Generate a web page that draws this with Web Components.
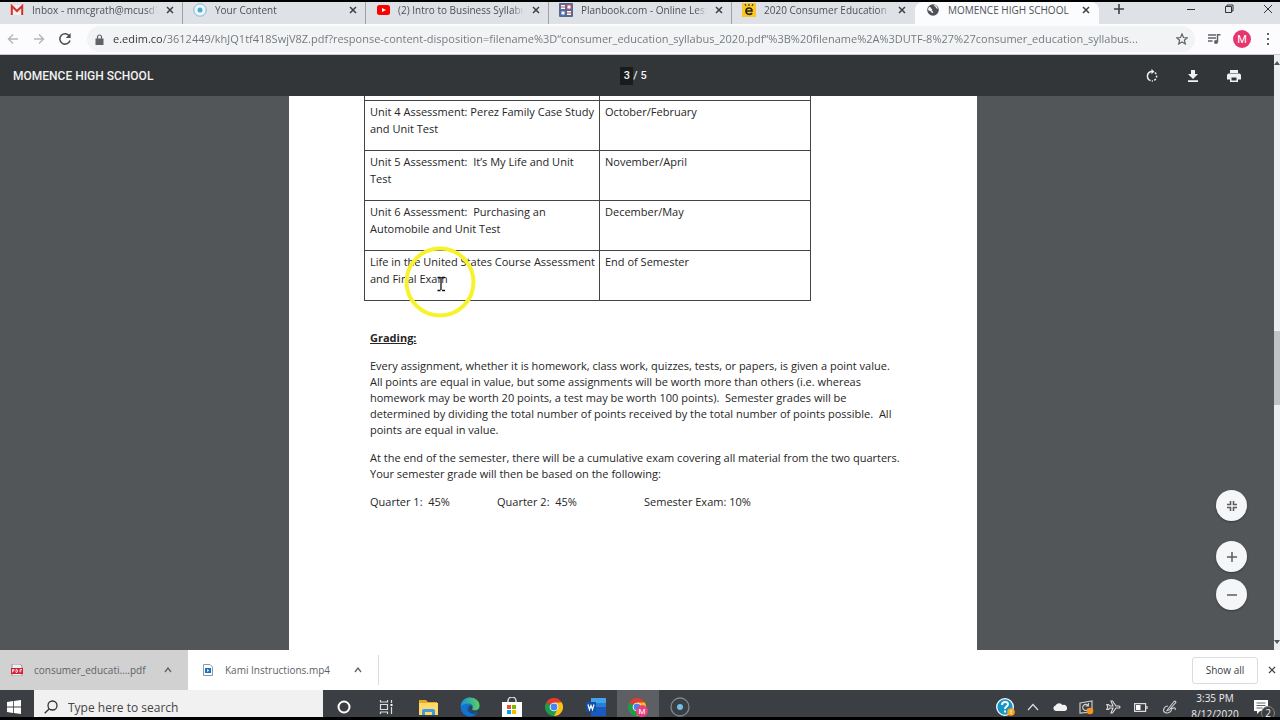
<!DOCTYPE html>
<html lang="en">
<head>
<meta charset="utf-8">
<title>MOMENCE HIGH SCHOOL</title>
<style>
html,body{height:100%;margin:0;background:#000}
body{font-family:"Open Sans","Noto Sans",sans-serif;overflow:hidden}
</style>
</head>
<body>
<desktop-screen></desktop-screen>
<script>
const reset = `:host,*{box-sizing:border-box}button{border:0;background:none;padding:0;margin:0;font:inherit;color:inherit;display:flex;align-items:center;justify-content:center}svg{display:block;flex:none}`;
const define = (name, html) => customElements.define(name, class extends HTMLElement {
  constructor(){
    super();
    const t = document.createElement('template');
    t.innerHTML = `<style>${reset}</style>` + html;
    this.attachShadow({mode:'open'}).append(t.content.cloneNode(true));
  }
});

define('browser-tab', `
<style>
:host{display:flex;align-items:center;flex:0 1 183px;min-width:0;height:22px;padding:0 6px 6px 10px;color:#4d5156;font-size:10px;border-right:1px solid #9fa3a8;background-clip:padding-box}
:host([active]){background:#fbfcfe;border-color:transparent;border-radius:8px 8px 0 0;flex-basis:184px;padding-left:11px}
:host([last]){border-color:transparent}
.icon{width:14px;height:14px;flex:none;display:flex;align-items:center;justify-content:center}
.label{flex:1;min-width:0;margin:0 6px 0 8px;white-space:nowrap;overflow:hidden;line-height:16px;-webkit-mask-image:linear-gradient(90deg,#000 calc(100% - 12px),transparent);mask-image:linear-gradient(90deg,#000 calc(100% - 12px),transparent)}
:host([active]) .label{-webkit-mask-image:none;mask-image:none}
button{width:12px;height:12px;flex:none;color:#3c4043}
</style>
<span class="icon"><slot name="icon"></slot></span><span class="label"><slot></slot></span>
<button aria-label="Close tab"><svg width="8" height="8" viewBox="0 0 8 8"><path d="M1 1l6 6M7 1l-6 6" stroke="currentColor" stroke-width="1.5"/></svg></button>`);

define('tab-strip', `
<style>
:host{display:flex;height:22px;background:#dee1e6;color:#3c4043}
.new{width:40px;height:14px}
.space{flex:1}
.win{width:38px;height:14px;color:#333}
.win:last-child{width:24px;margin-left:8px}
</style>
<browser-tab><svg slot="icon" width="14" height="12" viewBox="0 0 14 12"><path d="M1 1h12v10H1z" fill="#f0f0f0"/><path d="M1.800 11V2L7 7l5.200-5v9" fill="none" stroke="#d93025" stroke-width="2"/></svg>Inbox - mmcgrath@mcusd1.</browser-tab>
<browser-tab><svg slot="icon" width="14" height="14" viewBox="0 0 14 14"><circle cx="7" cy="7" r="6.200" fill="#eef6fa" stroke="#7fb9d6"/><circle cx="7" cy="7" r="2.500" fill="#4bacd8"/></svg>Your Content</browser-tab>
<browser-tab><svg slot="icon" width="14" height="10" viewBox="0 0 14 10"><rect x="1" width="13" height="10" rx="2.500" fill="#f00"/><path d="M6 3l4 2-4 2z" fill="#fff"/></svg>(2) Intro to Business Syllabus</browser-tab>
<browser-tab><svg slot="icon" width="14" height="14" viewBox="0 0 14 14"><rect width="14" height="14" rx="1" fill="#596890"/><path d="M2 2h4v4H2zM8 8h4v4H8z" fill="#fff"/><path d="M8 2h4v4H8z" fill="#fff" stroke="#c65265"/><path d="M2 8h4v4H2z" fill="#fff" stroke="#4a75c4"/><path d="M2 4h4M8 10h4" stroke="#d04848"/></svg>Planbook.com - Online Lesso</browser-tab>
<browser-tab last><svg slot="icon" width="14" height="14" viewBox="0 0 14 14"><path fill="#fbc723" d="M0 0h14v14H0z"/><path d="M4 8h6c0-4-6-4-6 0s5 4 6 2" fill="none" stroke="#2a2618" stroke-width="1.700"/><path d="M4 3L3 1M7 3V1M10 3l1-2" stroke="#2a2618"/></svg>2020 Consumer Education 4t</browser-tab>
<browser-tab active><svg slot="icon" width="12" height="12" viewBox="0 0 12 12"><circle cx="6" cy="6" r="5.800" fill="#4d5156"/><path d="M2 3c1 0 2 0 2 1s2 1 1 2 2 1 1 3c-2 0-2-2-3-2S1 6 1 5zM7 1c0 2 2 1 2 3 1 1 2 0 2 2 0-3-2-5-4-5z" fill="#f4f5f7"/></svg>MOMENCE HIGH SCHOOL</browser-tab>
<button class="new" aria-label="New tab"><svg width="12" height="12" viewBox="0 0 12 12"><path d="M6 1v10M1 6h10" stroke="currentColor" stroke-width="1.600"/></svg></button>
<span class="space"></span>
<button class="win" aria-label="Minimize"><svg width="10" height="10" viewBox="0 0 10 10"><path d="M1 5.500h8" stroke="currentColor"/></svg></button>
<button class="win" aria-label="Restore"><svg width="10" height="10" viewBox="0 0 10 10"><path d="M1.500 2.500h6v6h-6zM3 2V1h6v6H8" fill="none" stroke="currentColor"/></svg></button>
<button class="win" aria-label="Close window"><svg width="10" height="10" viewBox="0 0 10 10"><path d="M1 1l8 8M9 1l-8 8" stroke="currentColor"/></svg></button>`);

define('address-bar', `
<style>
:host{display:flex;align-items:center;height:31px;background:#fcfcfe;border-bottom:1px solid #c9cbd0;color:#5f6368}
.nav{width:26px;height:26px;color:#b3b5b9}
.nav.on{color:#4d5156}
form{flex:1;min-width:0;display:flex;align-items:center;height:26px;margin:0 5px 0 9px;padding:0 7px 0 8px;border-radius:13px;background:#f1f3f4}
input{flex:1;min-width:0;border:0;outline:0;padding:0 0 2px;margin:0 8px 0 9px;height:24px;font:11px "Open Sans","Noto Sans",sans-serif;color:#70757a;background:linear-gradient(90deg,#303134 50px,#70757a 50px);-webkit-background-clip:text;background-clip:text;-webkit-text-fill-color:transparent}
.list{width:28px;height:26px}
.avatar{width:18px;height:18px;margin:0 5px;border-radius:9px;background:#e5376e;color:#fff;font:11px Roboto,sans-serif}
.more{width:24px;height:26px}
</style>
<button class="nav" aria-label="Back"><svg width="12" height="12" viewBox="0 0 12 12"><path d="M11 6H2M6 1.500L1.500 6 6 10.500" fill="none" stroke="currentColor" stroke-width="1.400"/></svg></button>
<button class="nav" aria-label="Forward"><svg width="12" height="12" viewBox="0 0 12 12"><path d="M1 6h9M6 1.500L10.500 6 6 10.500" fill="none" stroke="currentColor" stroke-width="1.400"/></svg></button>
<button class="nav on" aria-label="Reload"><svg width="14" height="14" viewBox="0 0 14 14"><path d="M11.500 4.200A5.200 5.200 0 1 0 12 8.500" fill="none" stroke="currentColor" stroke-width="1.600"/><path d="M12.700 1v5h-5z" fill="currentColor"/></svg></button>
<form>
<svg width="9" height="11" viewBox="0 0 9 11"><path d="M2.500 5V3a2 2 0 0 1 4 0v2" fill="none" stroke="currentColor" stroke-width="1.200"/><path d="M.5 4.500h8V11h-8z" fill="currentColor"/></svg>
<input aria-label="Address" value="e.edim.co/3612449/khJQ1tf418SwjV8Z.pdf?response-content-disposition=filename%3D“consumer_education_syllabus_2020.pdf“%3B%20filename%2A%3DUTF-8%27%27consumer_education_syllabus...">
<button type="button" aria-label="Bookmark"><svg width="12" height="12" viewBox="0 0 12 12"><path d="M6 1l1.500 3.500 3.800.3-2.900 2.400.9 3.700L6 8.900l-3.300 2 .9-3.700L.7 4.800l3.800-.3z" fill="none" stroke="currentColor" stroke-width="1.200"/></svg></button>
</form>
<button class="list" aria-label="Media controls"><svg width="14" height="12" viewBox="0 0 14 12"><path d="M1 2h8M1 5h8M1 8h4.500M10.500 9V1.700H13.500" fill="none" stroke="currentColor" stroke-width="1.500"/><circle cx="9" cy="9" r="2" fill="currentColor"/></svg></button>
<button class="avatar" aria-label="Profile">M</button>
<button class="more" aria-label="Menu"><svg width="4" height="14" viewBox="0 0 4 14"><path d="M1 1h2v2H1zM1 6h2v2H1zM1 11h2v2H1z" fill="currentColor"/></svg></button>`);

define('pdf-toolbar', `
<style>
:host{display:grid;grid-template-columns:1fr auto 1fr;align-items:center;height:41px;padding:0 20px 0 13px;background:#323639;color:#f1f1f1;font:500 12px Roboto,sans-serif}
h1{font:inherit;margin:0}
label{display:flex;align-items:center;font-size:11px}
input{width:13px;height:18px;padding:0;border:0;text-align:center;font:inherit;color:inherit;background:#191b1c}
.tools{display:flex;justify-content:flex-end;gap:1px}
.tools button{width:40px;height:28px}
</style>
<h1>MOMENCE HIGH SCHOOL</h1>
<label><input aria-label="Page" value="3"><span>/ 5</span></label>
<div class="tools">
<button aria-label="Rotate"><svg width="14" height="14" viewBox="0 0 14 14"><path d="M7 2.500A4.700 4.700 0 0 0 5.500 11.600" fill="none" stroke="currentColor" stroke-width="1.500"/><path d="M6.500 0v5.200L9.400 2.600z" fill="currentColor"/><path d="M9.800 3.500a4.700 4.700 0 0 1-3 8.400" fill="none" stroke="currentColor" stroke-width="1.500" stroke-dasharray="2 1.500"/></svg></button>
<button aria-label="Download"><svg width="12" height="14" viewBox="0 0 12 14"><path d="M4 1h4v4h3L6 10 1 5h3zM1 11.300h10V13H1z" fill="currentColor"/></svg></button>
<button aria-label="Print"><svg width="14" height="14" viewBox="0 0 14 14"><path d="M3 1h8v3H3zM2 4.500h10a2 2 0 0 1 2 2V10.500h-3V13H3v-2.500H0v-4a2 2 0 0 1 2-2z" fill="currentColor"/><path d="M4.500 8.500h5v3h-5z" fill="#323639"/></svg></button>
</div>`);

define('syllabus-page', `
<style>
:host{display:block;flex:0 1 688px;min-width:0;background:#fff;color:#262626;padding:0 80px 0 75px;font:11px/16px "Open Sans","Noto Sans",sans-serif;white-space:nowrap}
table{border-collapse:collapse;table-layout:fixed;width:447px}
col:first-child{width:235px}
td{height:50px;border:1px solid #444;padding:2px 5px;vertical-align:top;line-height:17px}
.cut td{height:4px;padding:0;border-top:0}
.text{padding-left:6px}
h2{font:inherit;font-weight:700;text-decoration:underline;margin:29px 0 12px}
p{margin:0 0 12px}
.grades{display:grid;grid-template-columns:127px 147px 1fr}
</style>
<table><colgroup><col><col></colgroup><tbody>
<tr class="cut"><td></td><td></td></tr>
<tr><td>Unit 4 Assessment: Perez Family Case Study<br>and Unit Test</td><td>October/February</td></tr>
<tr><td>Unit 5 Assessment:&nbsp; It’s My Life and Unit<br>Test</td><td>November/April</td></tr>
<tr><td>Unit 6 Assessment:&nbsp; Purchasing an<br>Automobile and Unit Test</td><td>December/May</td></tr>
<tr><td>Life in the United States Course Assessment<br>and Final Exam</td><td>End of Semester</td></tr>
</tbody></table>
<div class="text">
<h2>Grading:</h2>
<p>Every assignment, whether it is homework, class work, quizzes, tests, or papers, is given a point value.<br>All points are equal in value, but some assignments will be worth more than others (i.e. whereas<br>homework may be worth 20 points, a test may be worth 100 points).&nbsp; Semester grades will be<br>determined by dividing the total number of points received by the total number of points possible.&nbsp; All<br>points are equal in value.</p>
<p>At the end of the semester, there will be a cumulative exam covering all material from the two quarters.<br>Your semester grade will then be based on the following:</p>
<div class="grades"><span>Quarter 1:&nbsp; 45%</span><span>Quarter 2:&nbsp; 45%</span><span>Semester Exam: 10%</span></div>
</div>`);

define('pdf-viewer', `
<style>
:host{display:flex;flex:1;min-height:0;background:#525659}
.main{flex:1;min-width:0;display:flex;flex-direction:column}
.canvas{flex:1;min-height:0;display:flex;justify-content:center;padding-right:8px;position:relative;overflow:hidden}
.zoom{position:absolute;right:27px;bottom:40px;display:flex;flex-direction:column;gap:7px}
.zoom button{width:31px;height:31px;border-radius:16px;background:#f5f6f7;color:#5a5d60;box-shadow:0 1px 2px #0005}
.zoom .fit{margin-bottom:13px}
.pointer{position:absolute;left:404px;top:150px}
.scroll{width:6px;background:#eceef1;display:flex;flex-direction:column;align-items:center;justify-content:space-between;padding:6px 0}
.thumb{width:6px;height:74px;background:#c1c3c6;margin-top:266px;margin-bottom:auto}
</style>
<div class="main"><pdf-toolbar></pdf-toolbar>
<div class="canvas"><syllabus-page></syllabus-page>
<svg class="pointer" width="72" height="72" viewBox="0 0 72 72"><circle cx="36" cy="36" r="33.500" fill="none" stroke="#f7f32a" stroke-width="4"/><path d="M33.500 31.500h3M38 31.500h3M33.500 44.500h3M38 44.500h3M37 32v12" fill="none" stroke="#111" stroke-width="1.300"/></svg>
<div class="zoom">
<button class="fit" aria-label="Fit to page"><svg width="12" height="12" viewBox="0 0 12 12"><path d="M1 4.500h3.500V1M7.500 1v3.500H11M11 7.500H7.500V11M4.500 11V7.500H1" fill="none" stroke="currentColor" stroke-width="1.600"/></svg></button>
<button aria-label="Zoom in"><svg width="12" height="12" viewBox="0 0 12 12"><path d="M6 1v10M1 6h10" stroke="currentColor" stroke-width="1.500"/></svg></button>
<button aria-label="Zoom out"><svg width="12" height="12" viewBox="0 0 12 12"><path d="M1 6h10" stroke="currentColor" stroke-width="1.500"/></svg></button>
</div></div></div>
<div class="scroll" aria-hidden="true"><svg width="6" height="4" viewBox="0 0 6 4"><path d="M3 0l3 4H0z" fill="#555"/></svg><span class="thumb"></span><svg width="6" height="4" viewBox="0 0 6 4"><path d="M0 0h6L3 4z" fill="#555"/></svg></div>`);

define('download-item', `
<style>
:host{display:flex;align-items:center;flex:0 1 190px;min-width:0;height:40px;color:#5f6368;font-size:10px;padding:0 12px 0 14px}
:host([pressed]){background:#d1d1d1;flex-basis:188px;padding-left:11px}
.file{flex:1;min-width:0;justify-content:flex-start;gap:11px;height:40px;white-space:nowrap}
.icon{width:12px;display:flex;justify-content:center}
.menu{width:16px;height:24px}
</style>
<button class="file"><span class="icon"><slot name="icon"></slot></span><span><slot></slot></span></button>
<button class="menu" aria-label="Download options"><svg width="8" height="6" viewBox="0 0 8 6"><path d="M1 5l3-4 3 4" fill="none" stroke="currentColor" stroke-width="1.300"/></svg></button>`);

define('download-shelf', `
<style>
:host{display:flex;align-items:center;height:40px;background:#fff;color:#3c4043;font-size:10px}
.rule{width:1px;height:30px;background:#dadce0}
.space{flex:1}
.all{width:66px;height:27px;border:1px solid #dadce0;border-radius:3px}
.close{width:16px;height:24px;margin-left:6px}
</style>
<download-item pressed><svg slot="icon" width="12" height="12" viewBox="0 0 12 12"><path d="M1 0h8l2 2v10H1z" fill="#eee" stroke="#999"/><path d="M0 4h12v6H0z" fill="#cf2036"/><path d="M1.500 8.500v-3h1.500v1.500H1.500M5 5.500v3h1l.8-1.500L6 5.500zM9 8.500v-3h2M9 7h1.500" fill="none" stroke="#fff" stroke-width=".8"/></svg>consumer_educati....pdf</download-item>
<download-item><svg slot="icon" width="10" height="12" viewBox="0 0 10 12"><path d="M.5.500H7l2.500 2.500v8.500h-9z" fill="#fff" stroke="#8d99a8"/><path d="M2 4h6v5H2z" fill="#1d6ebd"/><path d="M4 5l2.500 1.500L4 8z" fill="#d8f0ff"/></svg>Kami Instructions.mp4</download-item>
<span class="rule"></span><span class="space"></span>
<button class="all">Show all</button>
<button class="close" aria-label="Close downloads"><svg width="8" height="8" viewBox="0 0 8 8"><path d="M1 1l6 6M7 1l-6 6" stroke="currentColor" stroke-width="1.200"/></svg></button>`);

define('task-bar', `
<style>
:host{display:block;height:27px;overflow:hidden;background:#3b3e43;color:#eee}
.row{display:flex;height:34px}
.start{width:34px;padding-right:7px}
.search{width:289px;display:flex;align-items:center;gap:10px;padding-left:10px;background:#f1f1f1;color:#333}
input{flex:1;min-width:0;border:0;outline:0;background:none;padding:0;font:12px "Open Sans","Noto Sans",sans-serif;color:#444}
input::placeholder{color:#444;opacity:1}
.app{width:42px}
.app.on{background:#5d5f63}
.space{flex:1}
.tray{width:27px}
.tray.wide{width:31px}
.clock{width:60px;flex-direction:column;font-size:10px;line-height:16px;justify-content:flex-start}
.note{width:35px;padding-right:4px;position:relative}
.badge{position:absolute;left:16px;top:16px;width:14px;height:14px;border-radius:7px;background:#3b3e43;border:1px solid #888;font-size:10px;line-height:12px;text-align:center}
</style>
<div class="row">
<button class="start" aria-label="Start"><svg width="14" height="14" viewBox="0 0 14 14"><path d="M0 2l6-.9v5.500H0zM6.800 1L14 0v6.600H6.800zM0 7.400h6v5.500L0 12zM6.800 7.400H14V14l-7.200-1z" fill="#fff"/></svg></button>
<label class="search"><svg width="14" height="14" viewBox="0 0 14 14"><circle cx="8.500" cy="5.500" r="4.500" fill="none" stroke="currentColor" stroke-width="1.300"/><path d="M5.300 8.700L.7 13.300" stroke="currentColor" stroke-width="1.300"/></svg><input aria-label="Search" placeholder="Type here to search"></label>
<button class="app" aria-label="Cortana"><svg width="14" height="14" viewBox="0 0 14 14"><circle cx="7" cy="7" r="5.500" fill="none" stroke="#fff" stroke-width="2"/></svg></button>
<button class="app" aria-label="Task view"><svg width="14" height="14" viewBox="0 0 14 14"><path d="M1.500 4.500h7v5h-7zM1.500 0v2h7V0M1.500 14v-2h7v2M12.500 0v3M12.500 7v7" fill="none" stroke="#ddd" stroke-width="1.200"/><path d="M11.500 4h2v2h-2z" fill="#fff"/></svg></button>
<button class="app" aria-label="File Explorer"><svg width="19" height="16" viewBox="0 0 19 16"><path d="M0 1h7l2 2h9v12H0z" fill="#e9a925"/><path d="M0 4h19v12H0z" fill="#ffd96b"/><path d="M3 16v-4a2 2 0 0 1 2-2h9a2 2 0 0 1 2 2v4h-3v-3H6v3z" fill="#3f9be0"/></svg></button>
<button class="app" aria-label="Edge"><svg width="20" height="20" viewBox="0 0 20 20"><defs><linearGradient id="e" x1="0" x2="1"><stop stop-color="#1791dd"/><stop offset="1" stop-color="#5bd456"/></linearGradient></defs><circle cx="10" cy="10" r="9.500" fill="#1474cc"/><path d="M.6 9C1.500 3 6 .5 10 .5c5 0 9.500 3.500 9.500 8 0 3-2.500 5-5 5-2 0-3-.8-2-2 1.500-3-1-5-4-5C5 6.500 2 8 .6 9z" fill="url(#e)"/><path d="M8 9c-2 4 1 8 6 8 2 0 3.500-1 4.500-2C15 16 8 14.500 8 9z" fill="#0d4e9c"/><path d="M12.300 10c.5 1-.5 1.800-.2 2.500 1 1.500 4.500 1.500 6.900-.5l1 3-2.500.2C12 16 8 13 9 9c1-1 3-.5 3.300 1z" fill="#3b3e43"/></svg></button>
<button class="app" aria-label="Microsoft Store"><svg width="20" height="20" viewBox="0 0 20 20"><path d="M6 6V4a4 4 0 0 1 8 0v2" fill="none" stroke="#ddd" stroke-width="1.500"/><path d="M0 5h20v15H0z" fill="#fff"/><path d="M5 8h4v4H5z" fill="#f25022"/><path d="M10 8h4v4h-4z" fill="#7fba00"/><path d="M5 13h4v4H5z" fill="#00a4ef"/><path d="M10 13h4v4h-4z" fill="#ffb900"/></svg></button>
<button class="app" aria-label="Chrome"><svg width="18" height="18" viewBox="0 0 18 18"><path d="M9 9L1.200 4.500A9 9 0 0 1 16.800 4.500z" fill="#e33b2e"/><path d="M9 9V4.500h7.800A9 9 0 0 1 9 18z" fill="#fbc116"/><path d="M9 9l3.500 2L9 18A9 9 0 0 1 1.200 4.500z" fill="#229a4b"/><circle cx="9" cy="9" r="4.300" fill="#fff"/><circle cx="9" cy="9" r="3.400" fill="#4285f4"/></svg></button>
<button class="app" aria-label="Word"><svg width="20" height="18" viewBox="0 0 20 18"><path d="M5 0h15v6H5z" fill="#41a5ee"/><path d="M5 5h15v5H5z" fill="#2b7cd3"/><path d="M5 9h15v9H5z" fill="#185abd"/><path d="M0 4h10v10H0z" fill="#1450a8"/><path d="M2 6.500L3.500 11.500 5 7.500l1.500 4L8 6.500" fill="none" stroke="#fff" stroke-width="1.200"/></svg></button>
<button class="app on" aria-label="Chrome, profile M"><svg width="20" height="20" viewBox="0 0 20 20"><path d="M9 10L1.200 5.500A9 9 0 0 1 16.800 5.500z" fill="#e33b2e"/><path d="M9 10V5.500h7.800A9 9 0 0 1 9 19z" fill="#fbc116"/><path d="M9 10l3.500 2L9 19A9 9 0 0 1 1.200 5.500z" fill="#229a4b"/><circle cx="9" cy="10" r="4.300" fill="#fff"/><circle cx="9" cy="10" r="3.400" fill="#4285f4"/><circle cx="14" cy="14" r="6" fill="#e84080"/><text x="14" y="17" font-family="Roboto,sans-serif" font-size="8" text-anchor="middle" fill="#fff">M</text></svg></button>
<button class="app" aria-label="Screen recorder"><svg width="20" height="20" viewBox="0 0 20 20"><circle cx="10" cy="10" r="9" fill="none" stroke="#7d8a92" stroke-width="1.300"/><circle cx="10" cy="10" r="3" fill="#72bfe6"/></svg></button>
<span class="space"></span>
<button class="tray" aria-label="Help"><svg width="19" height="19" viewBox="0 0 19 19"><circle cx="9" cy="9" r="8.300" fill="#1596c8" stroke="#fff" stroke-width="1.300"/><path d="M6 7c0-4 6-4 6-.8C12 8.500 9 8.500 9 11M9 12.500v2" fill="none" stroke="#fff" stroke-width="2"/><circle cx="15" cy="14" r="3.800" fill="#f4a81d"/><path d="M15 12v2.500M15 15v1" stroke="#fff"/></svg></button>
<button class="tray" aria-label="Show hidden icons"><svg width="12" height="8" viewBox="0 0 12 8"><path d="M1 7l5-5.500L11 7" fill="none" stroke="#ddd" stroke-width="1.200"/></svg></button>
<button class="tray" aria-label="OneDrive"><svg width="14" height="10" viewBox="0 0 14 10"><path d="M3 9a2.800 2.800 0 0 1-.5-5.500A4 4 0 0 1 9.500 3 3 3 0 0 1 12 9z" fill="#f2f2f2"/></svg></button>
<button class="tray" aria-label="Update"><svg width="15" height="15" viewBox="0 0 15 15"><path d="M1 3l12-2v11L1 13z" fill="none" stroke="#ccc" stroke-width="1.200"/><path d="M9 5.500a3 3 0 1 0 .5 3M9.500 3v3h-3" fill="none" stroke="#ccc" stroke-width="1.200"/><circle cx="11" cy="11" r="3.300" fill="#f7931e"/></svg></button>
<button class="tray" aria-label="Airplane mode"><svg width="15" height="14" viewBox="0 0 15 14"><path d="M.8 4.500h1.500L4 6h3L5 1h1.500L10 6h3a1 1 0 0 1 0 2h-3l-3.500 5H5l2-5H4L2.300 9.500H.8L1.800 7z" fill="none" stroke="#ddd" stroke-width="1.100"/></svg></button>
<button class="tray" aria-label="Battery"><svg width="14" height="9" viewBox="0 0 14 9"><path d="M.6.600h11v7.800H.6zM13 3v3" fill="none" stroke="#ddd" stroke-width="1.200"/><path d="M2 2h4.500v5H2z" fill="#fff"/></svg></button>
<button class="tray wide" aria-label="Windows Ink"><svg width="15" height="15" viewBox="0 0 15 15"><path d="M6 9l6-7.500c1-1 2.500.5 1.500 1.500L7 10l-2 .5zM6 6C2 6 0 11 3 12.500s7-1 6.500-3.500M9 9c4-2 5-1 4 1" fill="none" stroke="#ccc" stroke-width="1.100"/></svg></button>
<button class="clock"><span>3:35 PM</span><span>8/12/2020</span></button>
<button class="note" aria-label="Notifications"><svg width="14" height="16" viewBox="0 0 14 16"><path d="M0 1h14v11H6l-3 3v-3H0z" fill="#fff"/><path d="M2.500 4h9M2.500 6.500h9M2.500 9h6" stroke="#555" stroke-width=".9"/></svg><span class="badge">2</span></button>
</div>`);

define('desktop-screen', `
<style>
:host{display:flex;flex-direction:column;height:100vh;padding:2px 0 3px;background:#000;overflow:hidden}
tab-strip,address-bar,download-shelf,task-bar{flex:none}
</style>
<tab-strip></tab-strip><address-bar></address-bar><pdf-viewer></pdf-viewer><download-shelf></download-shelf><task-bar></task-bar>`);
</script>
</body>
</html>
